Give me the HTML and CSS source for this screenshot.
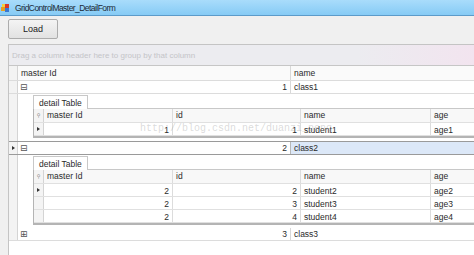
FILE: index.html
```html
<!DOCTYPE html>
<html>
<head>
<meta charset="utf-8">
<link rel="stylesheet" href="styles.css">
</head>
<body>
<div class="window">
  <div class="titlebar">
    <svg class="appicon" width="10" height="10" viewBox="0 0 10 10">
      <rect x="0" y="4" width="4" height="4" fill="#e8a020"/>
      <rect x="4" y="1" width="4" height="4" fill="#d83a2a"/>
      <rect x="4" y="5" width="4" height="4" fill="#3a78d0"/>
      <rect x="1" y="1" width="3" height="3" fill="#f4d040"/>
    </svg>
    <span class="title">GridControlMaster_DetailForm</span>
  </div>
  <div class="toolbar">
    <button class="btn">Load</button>
  </div>
  <div class="grid">
    <div class="grouppanel">Drag a column header here to group by that column</div>
    <div class="row header">
      <div class="ind"></div>
      <div class="cell c-mid">master Id</div>
      <div class="cell c-name">name</div>
    </div>

    <div class="row mrow">
      <div class="ind"></div>
      <div class="cell c-mid num"><span class="exp">&#8863;</span><span>1</span></div>
      <div class="cell c-name">class1</div>
    </div>
    <div class="detail">
      <div class="ind"></div>
      <div class="dwrap">
        <div class="tabs"><div class="tab">detail Table</div><div class="tabline"></div></div>
        <div class="dgrid">
          <div class="drow dheader">
            <div class="dind"><span class="mag">&#9906;</span></div>
            <div class="dcell d1">master Id</div>
            <div class="dcell d2">id</div>
            <div class="dcell d3">name</div>
            <div class="dcell d4">age</div>
          </div>
          <div class="drow">
            <div class="dind"><span class="arr"></span></div>
            <div class="dcell d1 num">1</div>
            <div class="dcell d2 num">1</div>
            <div class="dcell d3">student1</div>
            <div class="dcell d4">age1</div>
          </div>
        </div>
      </div>
    </div>

    <div class="row mrow focused">
      <div class="ind"><span class="arr"></span></div>
      <div class="cell c-mid num fcell"><span class="exp">&#8863;</span><span>2</span></div>
      <div class="cell c-name sel">class2</div>
    </div>
    <div class="detail">
      <div class="ind"></div>
      <div class="dwrap">
        <div class="tabs"><div class="tab">detail Table</div><div class="tabline"></div></div>
        <div class="dgrid">
          <div class="drow dheader">
            <div class="dind"><span class="mag">&#9906;</span></div>
            <div class="dcell d1">master Id</div>
            <div class="dcell d2">id</div>
            <div class="dcell d3">name</div>
            <div class="dcell d4">age</div>
          </div>
          <div class="drow">
            <div class="dind"><span class="arr"></span></div>
            <div class="dcell d1 num">2</div>
            <div class="dcell d2 num">2</div>
            <div class="dcell d3">student2</div>
            <div class="dcell d4">age2</div>
          </div>
          <div class="drow">
            <div class="dind"></div>
            <div class="dcell d1 num">2</div>
            <div class="dcell d2 num">3</div>
            <div class="dcell d3">student3</div>
            <div class="dcell d4">age3</div>
          </div>
          <div class="drow">
            <div class="dind"></div>
            <div class="dcell d1 num">2</div>
            <div class="dcell d2 num">4</div>
            <div class="dcell d3">student4</div>
            <div class="dcell d4">age4</div>
          </div>
        </div>
      </div>
    </div>

    <div class="row mrow">
      <div class="ind"></div>
      <div class="cell c-mid num"><span class="exp">&#8862;</span><span>3</span></div>
      <div class="cell c-name">class3</div>
    </div>
    <div class="filler"><div class="ind"></div></div>
  </div>
  <div class="watermark">http://blog.csdn.net/duanzi_peng</div>
</div>
</body>
</html>
```

FILE: styles.css
```css
html, body {
  margin: 0;
  padding: 0;
}
body {
  width: 474px;
  height: 255px;
  overflow: hidden;
  background: #f0f0f0;
  font-family: "Liberation Sans", Arial, sans-serif;
  font-size: 8.5px;
  color: #2a2a2a;
}
.window {
  position: relative;
  width: 474px;
  height: 255px;
  overflow: hidden;
}
.titlebar {
  height: 15px;
  border-bottom: 1px solid #5c9bc9;
  background: linear-gradient(#a9dcfb, #86cbf5);
  display: flex;
  align-items: center;
}
.appicon {
  margin-left: 1px;
  margin-right: 4px;
}
.title {
  font-size: 8.5px;
  letter-spacing: -0.55px;
  color: #1c2a36;
}
.toolbar {
  height: 28px;
  padding-left: 8px;
  box-sizing: border-box;
  padding-top: 3px;
}
.btn {
  width: 50px;
  height: 20px;
  padding: 0;
  border: 1px solid #acacac;
  border-radius: 2px;
  background: linear-gradient(#f4f4f4, #e2e2e2);
  font-family: inherit;
  font-size: 9px;
  color: #222;
}
.grid {
  margin-left: 8px;
  border-left: 1px solid #c4c4c4;
  border-top: 1px solid #c4c4c4;
  background: #fff;
  height: 211px;
  box-sizing: border-box;
}
.grouppanel {
  height: 20px;
  border-bottom: 1px solid #c6c6c6;
  background: linear-gradient(90deg, #ececf0 0%, #ececf0 75%, #f2e4ef 100%);
  color: #c4c4c8;
  padding-left: 3px;
  font-size: 8px;
  line-height: 21px;
}
.row {
  display: flex;
  height: 12px;
  border-bottom: 1px solid #dcdcdc;
  line-height: 13px;
}
.header {
  height: 14px;
  line-height: 14px;
  background: #fafafa;
}
.ind {
  width: 8px;
  flex: none;
  background: #f3f3f3;
  border-right: 1px solid #d4d4d4;
  display: flex;
  align-items: center;
  justify-content: center;
}
.cell {
  box-sizing: border-box;
  padding: 0 3px;
  white-space: nowrap;
  overflow: hidden;
}
.c-mid {
  width: 273px;
  border-right: 1px solid #d8d8d8;
}
.c-name {
  flex: 1;
}
.num {
  text-align: right;
}
.mrow .c-mid {
  display: flex;
  justify-content: space-between;
  padding-left: 2px;
}
.exp {
  font-family: "DejaVu Sans", sans-serif;
  font-size: 9px;
  color: #555;
  line-height: 12px;
}
.focused {
  border-top: 1px solid #9a9a9a;
  border-bottom: 1px solid #9a9a9a;
}
.fcell {
  background: #fff;
  border-right: 1px solid #b8b8b8;
}
.sel {
  background: #dce8f8;
}
.arr {
  width: 0;
  height: 0;
  border-top: 2.5px solid transparent;
  border-bottom: 2.5px solid transparent;
  border-left: 3px solid #333;
}
.detail {
  display: flex;
}
.dwrap {
  flex: 1;
  padding: 1px 0 3px 15px;
}
.tabs {
  display: flex;
  height: 14px;
}
.tab {
  width: 55px;
  box-sizing: border-box;
  border: 1px solid #c8c8c8;
  border-bottom: none;
  background: #fff;
  padding-left: 5px;
  line-height: 14px;
}
.tabline {
  flex: 1;
  border-bottom: 1px solid #c8c8c8;
}
.dgrid {
  border-left: 1px solid #b4b4b4;
  border-bottom: 2px solid #b4b4b4;
}
.drow {
  display: flex;
  height: 12px;
  line-height: 14px;
  border-bottom: 1px solid #e0e0e0;
}
.dheader {
  height: 13px;
  line-height: 13px;
  background: #f8f8f8;
}
.dind {
  width: 9px;
  flex: none;
  border-right: 1px solid #d4d4d4;
  background: #f4f4f4;
  display: flex;
  align-items: center;
  justify-content: center;
}
.mag {
  font-family: "DejaVu Sans", sans-serif;
  font-size: 5px;
  color: #777;
}
.dcell {
  box-sizing: border-box;
  padding: 0 3px;
  white-space: nowrap;
  overflow: hidden;
  border-right: 1px solid #dcdcdc;
}
.d1 { width: 129px; }
.d2 { width: 128px; }
.d3 { width: 130px; }
.d4 { flex: 1; border-right: none; }
.filler {
  display: flex;
  height: 20px;
}
.filler .ind {
  background: #fff;
  border-right: none;
}
.watermark {
  position: absolute;
  left: 140px;
  top: 123px;
  font-family: "Liberation Mono", monospace;
  font-size: 10px;
  color: rgba(150, 150, 150, 0.35);
  pointer-events: none;
}
```
